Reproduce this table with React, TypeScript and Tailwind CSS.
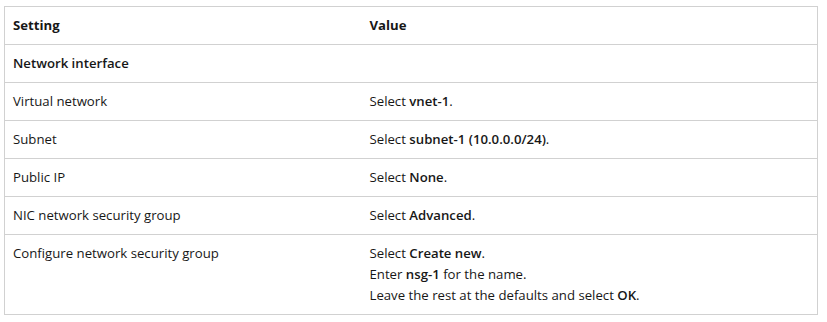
const rows: { setting: string; value: React.ReactNode }[] = [
  { setting: 'Virtual network', value: <>Select <b className="font-semibold">vnet-1</b>.</> },
  { setting: 'Subnet', value: <>Select <b className="font-semibold">subnet-1 (10.0.0.0/24)</b>.</> },
  { setting: 'Public IP', value: <>Select <b className="font-semibold">None</b>.</> },
  { setting: 'NIC network security group', value: <>Select <b className="font-semibold">Advanced</b>.</> },
  {
    setting: 'Configure network security group',
    value: (
      <>
        Select <b className="font-semibold">Create new</b>.<br />
        Enter <b className="font-semibold">nsg-1</b> for the name.<br />
        Leave the rest at the defaults and select <b className="font-semibold">OK</b>.
      </>
    ),
  },
];

export default function App() {
  return (
    <div className="bg-white w-[827px] h-[322px] pl-1 pt-1.5 font-['Open_Sans',sans-serif] text-[13.2px] leading-[21px] text-[#171717]">
      <table className="w-[814px] border-collapse border border-[#d1d1d1] table-fixed">
        <colgroup>
          <col className="w-[357px]" />
          <col />
        </colgroup>
        <thead>
          <tr className="border-b border-[#d1d1d1]">
            <th className="text-left font-bold px-2 py-2">Setting</th>
            <th className="text-left font-bold px-2 py-2">Value</th>
          </tr>
        </thead>
        <tbody>
          <tr className="border-b border-[#d1d1d1]">
            <td className="px-2 py-2 font-semibold">Network interface</td>
            <td className="px-2 py-2"></td>
          </tr>
          {rows.map((r) => (
            <tr key={r.setting} className="border-b border-[#d1d1d1]">
              <td className="px-2 py-2 align-top">{r.setting}</td>
              <td className="px-2 py-2 align-top">{r.value}</td>
            </tr>
          ))}
        </tbody>
      </table>
    </div>
  );
}
